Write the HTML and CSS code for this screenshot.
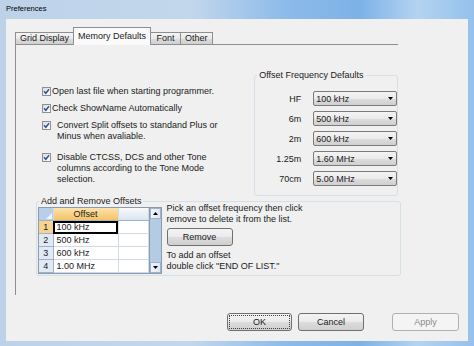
FILE: index.html
```html
<!DOCTYPE html>
<html lang="en">
<head>
  <meta charset="UTF-8">
  <title>Preferences</title>
  <link rel="stylesheet" href="styles.css">
</head>
<body>
<div class="window">
  <div class="titlebar">Preferences</div>

  <div class="client">
    <div class="tabs">
      <div class="tab">Grid Display</div>
      <div class="tab selected">Memory Defaults</div>
      <div class="tab">Font</div>
      <div class="tab">Other</div>
    </div>

    <div class="panel">
      <div class="top-row">
        <div class="checks">
          <label class="check">
            <span class="box"><svg width="7" height="7" viewBox="0 0 7 7"><path d="M1 3.3 L2.8 5.3 L6 1.2" fill="none" stroke="#2f4f8f" stroke-width="1.4"/></svg></span>
            <span>Open last file when starting programmer.</span>
          </label>
          <label class="check">
            <span class="box"><svg width="7" height="7" viewBox="0 0 7 7"><path d="M1 3.3 L2.8 5.3 L6 1.2" fill="none" stroke="#2f4f8f" stroke-width="1.4"/></svg></span>
            <span>Check ShowName Automatically</span>
          </label>
          <label class="check wide spaced">
            <span class="box"><svg width="7" height="7" viewBox="0 0 7 7"><path d="M1 3.3 L2.8 5.3 L6 1.2" fill="none" stroke="#2f4f8f" stroke-width="1.4"/></svg></span>
            <span>Convert Split offsets to standand Plus or<br>Minus when avaliable.</span>
          </label>
          <label class="check wide">
            <span class="box"><svg width="7" height="7" viewBox="0 0 7 7"><path d="M1 3.3 L2.8 5.3 L6 1.2" fill="none" stroke="#2f4f8f" stroke-width="1.4"/></svg></span>
            <span>Disable CTCSS, DCS and other Tone<br>columns according to the Tone Mode<br>selection.</span>
          </label>
        </div>

        <fieldset class="group offsets">
          <legend>Offset Frequency Defaults</legend>
          <div class="freq-grid">
            <span class="freq-label">HF</span>
            <div class="combo"><span>100 kHz</span><svg width="5" height="3" viewBox="0 0 5 3"><path d="M0 0 H5 L2.5 3 Z" fill="#000"/></svg></div>
            <span class="freq-label">6m</span>
            <div class="combo"><span>500 kHz</span><svg width="5" height="3" viewBox="0 0 5 3"><path d="M0 0 H5 L2.5 3 Z" fill="#000"/></svg></div>
            <span class="freq-label">2m</span>
            <div class="combo"><span>600 kHz</span><svg width="5" height="3" viewBox="0 0 5 3"><path d="M0 0 H5 L2.5 3 Z" fill="#000"/></svg></div>
            <span class="freq-label">1.25m</span>
            <div class="combo"><span>1.60 MHz</span><svg width="5" height="3" viewBox="0 0 5 3"><path d="M0 0 H5 L2.5 3 Z" fill="#000"/></svg></div>
            <span class="freq-label">70cm</span>
            <div class="combo"><span>5.00 MHz</span><svg width="5" height="3" viewBox="0 0 5 3"><path d="M0 0 H5 L2.5 3 Z" fill="#000"/></svg></div>
          </div>
        </fieldset>
      </div>

      <fieldset class="group add-remove">
        <legend>Add and Remove Offsets</legend>
        <div class="add-remove-body">
          <div class="grid">
            <table>
              <colgroup>
                <col class="col-head">
                <col class="col-offset">
                <col class="col-blank">
              </colgroup>
              <tr>
                <th class="corner"><svg width="6" height="6" viewBox="0 0 6 6"><path d="M6 0 V6 H0 Z" fill="#eef4fb"/></svg></th>
                <th class="head-active">Offset</th>
                <th class="head-plain"></th>
              </tr>
              <tr>
                <td class="rownum active">1</td>
                <td class="current">100 kHz</td>
                <td></td>
              </tr>
              <tr>
                <td class="rownum">2</td>
                <td>500 kHz</td>
                <td></td>
              </tr>
              <tr>
                <td class="rownum">3</td>
                <td>600 kHz</td>
                <td></td>
              </tr>
              <tr>
                <td class="rownum">4</td>
                <td>1.00 MHz</td>
                <td></td>
              </tr>
            </table>
            <div class="scrollbar">
              <div class="sb-btn"><svg width="5" height="3" viewBox="0 0 5 3"><path d="M0 3 H5 L2.5 0 Z" fill="#000"/></svg></div>
              <div class="sb-track"></div>
              <div class="sb-btn"><svg width="5" height="3" viewBox="0 0 5 3"><path d="M0 0 H5 L2.5 3 Z" fill="#000"/></svg></div>
            </div>
          </div>

          <div class="info">
            <p>Pick an offset frequency then click<br>remove to delete it from the list.</p>
            <button class="btn remove-btn">Remove</button>
            <p class="add-hint">To add an offset<br>double click "END OF LIST."</p>
          </div>
        </div>
      </fieldset>
    </div>

    <div class="buttons">
      <button class="btn default">OK</button>
      <button class="btn cancel">Cancel</button>
      <button class="btn apply" disabled>Apply</button>
    </div>
  </div>
</div>
</body>
</html>
```

FILE: styles.css
```css
body {
  margin: 0;
  font-family: "Liberation Sans", Arial, sans-serif;
  font-size: 9px;
  color: #1a1a1a;
}

.window {
  width: 474px;
  height: 346px;
  display: flex;
  flex-direction: column;
  background: linear-gradient(90deg, #bdd2e9 0%, #c3d7ec 40%, #8dbbea 60%, #7db2e7 76%, #b4d3f1 88%, #95c1ec 100%);
}

.titlebar {
  height: 19px;
  line-height: 18px;
  padding-left: 6px;
  font-size: 7.5px;
  color: #000;
}

.client {
  flex: 1;
  margin: 0 6px 5px 6px;
  background-color: #f0f0f0;
  display: flex;
  flex-direction: column;
}

/* tab strip */
.tabs {
  display: flex;
  align-items: flex-end;
  height: 25px;
  padding-left: 10px;
  box-sizing: border-box;
}

.tab {
  height: 11px;
  min-width: 31px;
  box-sizing: content-box;
  line-height: 11px;
  padding: 0 4px;
  border: 1px solid #8c8e94;
  border-bottom: none;
  margin-left: -1px;
  text-align: center;
  background: linear-gradient(#f4f4f4, #e9e9e9 50%, #dcdcdc 51%, #d0d0d0);
  color: #222;
}

.tab:nth-child(n+3) {
  min-width: 21px;
}

.tab.selected {
  height: 17px;
  line-height: 16px;
  margin-bottom: -1px;
  background: #fafafa;
  position: relative;
  z-index: 1;
}

.panel {
  width: 383px;
  height: 251px;
  margin-left: 9px;
  box-sizing: border-box;
  border-top: 1px solid #8c8e94;
  border-left: 1px solid #8c8e94;
}

.top-row {
  display: flex;
  padding-top: 25px;
}

/* checkboxes */
.checks {
  width: 214px;
  margin-left: 26px;
  margin-top: 16px;
}

.check {
  display: flex;
  gap: 1px;
  line-height: 11px;
  margin-bottom: 6px;
}

.check.wide {
  gap: 6px;
}

.check.spaced {
  margin-bottom: 10px;
}

.box {
  width: 7px;
  height: 7px;
  flex: none;
  margin-top: 1px;
  border: 1px solid #8e8f8f;
  background: linear-gradient(135deg, #d6dde8, #ffffff);
  display: flex;
}

/* group boxes */
.group {
  margin: 0;
  border: 1px solid #d5dfe5;
  border-radius: 3px;
  min-width: 0;
  box-sizing: border-box;
}

.group legend {
  padding: 0 2px;
  margin-left: 2px;
  line-height: 10px;
}

.offsets {
  width: 145px;
  padding: 11px 0 9px 0;
}

.freq-grid {
  display: grid;
  grid-template-columns: 46px 84px;
  column-gap: 12px;
  row-gap: 5px;
  align-items: center;
}

.freq-label {
  text-align: right;
}

.combo {
  height: 15px;
  box-sizing: border-box;
  border: 1px solid #7b7b7b;
  border-radius: 2px;
  background: linear-gradient(#f3f3f3, #ebebeb 50%, #dddddd 51%, #d0d0d0);
  display: flex;
  align-items: center;
  justify-content: space-between;
  padding: 0 3px 0 2px;
}

.add-remove {
  width: 365px;
  margin-left: 20px;
  padding: 1px 0 1px 1px;
}

.add-remove legend {
  margin-left: 1px;
}

.add-remove-body {
  display: flex;
}

/* offsets grid */
.grid {
  display: flex;
  border: 1px solid #8a9bb0;
  background: #fff;
}

.grid table {
  border-collapse: collapse;
  table-layout: fixed;
  width: 109px;
}

.col-head { width: 14px; }
.col-offset { width: 65px; }
.col-blank { width: 30px; }

.grid th,
.grid td {
  height: 12px;
  padding: 0;
  border: 1px solid #d2dae6;
  font-weight: normal;
  line-height: 12px;
  white-space: nowrap;
  overflow: hidden;
}

.grid tr:first-child th {
  border-top: none;
  border-bottom-color: #9eb3cc;
}

.grid tr > :first-child {
  border-left: none;
}

.grid td {
  padding-left: 3px;
}

.grid td.rownum {
  padding-left: 0;
  text-align: center;
  background: #e1e9f4;
  border-color: #9eb3cc;
}

.grid td.rownum.active {
  background: #f7d38d;
}

.grid td.current {
  outline: 2px solid #000;
  outline-offset: -2px;
}

.corner {
  background: #b9cee8;
  text-align: right;
  vertical-align: bottom;
  border-color: #9eb3cc;
}

.corner svg {
  display: block;
  margin: 0 1px 1px auto;
}

.head-active {
  background: linear-gradient(#fbe2ad, #f5c365);
  border-color: #d9a850;
}

.head-plain {
  background: linear-gradient(#f7f9fc, #dbe4ef);
}

.scrollbar {
  width: 11px;
  display: flex;
  flex-direction: column;
  border-left: 1px solid #8a9bb0;
  background: #b5cae3;
}

.sb-btn {
  height: 11px;
  display: flex;
  align-items: center;
  justify-content: center;
  background: linear-gradient(90deg, #f3f6fa, #dde6f1);
  border: 1px solid #9eb3cc;
  box-sizing: border-box;
}

.sb-track {
  flex: 1;
}

/* right side text */
.info {
  margin-left: 5px;
  margin-top: -4px;
}

.info p {
  margin: 0;
  line-height: 11px;
}

.info .add-hint {
  margin-top: 4px;
}

/* buttons */
.btn {
  height: 18px;
  padding: 0;
  border: 1px solid #707070;
  border-radius: 3px;
  background: linear-gradient(#f3f3f3, #ebebeb 50%, #dddddd 51%, #cfcfcf);
  font-family: "Liberation Sans", Arial, sans-serif;
  font-size: 9px;
  color: #1a1a1a;
}

.remove-btn {
  width: 66px;
  margin-top: 3px;
  display: block;
}

.buttons {
  display: flex;
  justify-content: flex-end;
  gap: 6px;
  padding-right: 9px;
  margin-top: 18px;
}

.btn.default {
  width: 65px;
  outline: 1px dotted #404040;
  outline-offset: -3px;
}

.btn.cancel {
  width: 66px;
}

.btn.apply {
  width: 67px;
  margin-left: 22px;
  border-color: #adb2b5;
  background: #f4f4f4;
  color: #8a8a8a;
}
```
